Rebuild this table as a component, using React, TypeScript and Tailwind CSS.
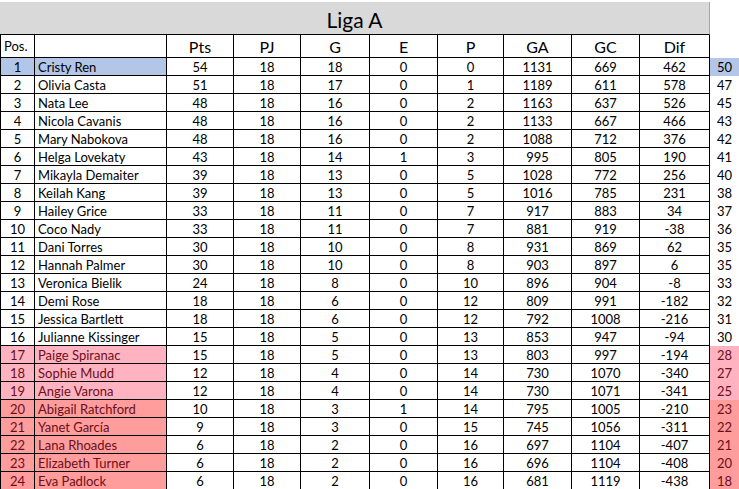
import React from "react";

type Row = [number, string, number, number, number, number, number, number, number, number, number];

const rows: Row[] = [
  [1, "Cristy Ren", 54, 18, 18, 0, 0, 1131, 669, 462, 50],
  [2, "Olivia Casta", 51, 18, 17, 0, 1, 1189, 611, 578, 47],
  [3, "Nata Lee", 48, 18, 16, 0, 2, 1163, 637, 526, 45],
  [4, "Nicola Cavanis", 48, 18, 16, 0, 2, 1133, 667, 466, 43],
  [5, "Mary Nabokova", 48, 18, 16, 0, 2, 1088, 712, 376, 42],
  [6, "Helga Lovekaty", 43, 18, 14, 1, 3, 995, 805, 190, 41],
  [7, "Mikayla Demaiter", 39, 18, 13, 0, 5, 1028, 772, 256, 40],
  [8, "Keilah Kang", 39, 18, 13, 0, 5, 1016, 785, 231, 38],
  [9, "Hailey Grice", 33, 18, 11, 0, 7, 917, 883, 34, 37],
  [10, "Coco Nady", 33, 18, 11, 0, 7, 881, 919, -38, 36],
  [11, "Dani Torres", 30, 18, 10, 0, 8, 931, 869, 62, 35],
  [12, "Hannah Palmer", 30, 18, 10, 0, 8, 903, 897, 6, 35],
  [13, "Veronica Bielik", 24, 18, 8, 0, 10, 896, 904, -8, 33],
  [14, "Demi Rose", 18, 18, 6, 0, 12, 809, 991, -182, 32],
  [15, "Jessica Bartlett", 18, 18, 6, 0, 12, 792, 1008, -216, 31],
  [16, "Julianne Kissinger", 15, 18, 5, 0, 13, 853, 947, -94, 30],
  [17, "Paige Spiranac", 15, 18, 5, 0, 13, 803, 997, -194, 28],
  [18, "Sophie Mudd", 12, 18, 4, 0, 14, 730, 1070, -340, 27],
  [19, "Angie Varona", 12, 18, 4, 0, 14, 730, 1071, -341, 25],
  [20, "Abigail Ratchford", 10, 18, 3, 1, 14, 795, 1005, -210, 23],
  [21, "Yanet García", 9, 18, 3, 0, 15, 745, 1056, -311, 22],
  [22, "Lana Rhoades", 6, 18, 2, 0, 16, 697, 1104, -407, 21],
  [23, "Elizabeth Turner", 6, 18, 2, 0, 16, 696, 1104, -408, 20],
  [24, "Eva Padlock", 6, 18, 2, 0, 16, 681, 1119, -438, 18],
];

const font = { fontFamily: "Lato, 'Open Sans', sans-serif" };

function rowStyle(pos: number): { bg: string; text: string } {
  if (pos === 1) return { bg: "bg-[#b4c6e7]", text: "text-black" };
  if (pos >= 17 && pos <= 19) return { bg: "bg-[#ffb3c1]", text: "text-[#6b0f1a]" };
  if (pos >= 20) return { bg: "bg-[#ff9c9c]", text: "text-[#6b0f1a]" };
  return { bg: "bg-white", text: "text-black" };
}

const numCols = ["w-[67px]", "w-[67px]", "w-[69px]", "w-[68px]", "w-[66px]", "w-[68px]", "w-[68px]", "w-[70px]"];

export default function App() {
  return (
    <div className="w-[739px] h-[489px] overflow-hidden bg-white text-black" style={font}>
      <div className="flex h-[2px] bg-white" />
      <div className="flex h-[33px]">
        <div className="w-[710px] bg-[#d9d9d9] border-b border-black border-r border-r-[#a6a6a6] flex items-center justify-center">
          <span className="text-[21px] leading-none pt-[3px]">Liga A</span>
        </div>
        <div className="flex-1 bg-white" />
      </div>
      <div className="flex h-[23px] text-[16px]">
        <div className="w-[35px] border-l border-black border-r border-b flex items-end pl-[3px] pb-[1px] text-[13px]">Pos.</div>
        <div className="w-[132px] border-r border-b border-black" />
        {["Pts", "PJ", "G", "E", "P", "GA", "GC", "Dif"].map((h, i) => (
          <div key={h} className={`${numCols[i]} border-r border-b border-black flex items-end justify-center leading-[20px]`}>
            {h}
          </div>
        ))}
        <div className="flex-1 bg-white" />
      </div>
      {rows.map((r) => {
        const s = rowStyle(r[0]);
        return (
          <div key={r[0]} className="flex h-[18px] text-[13px] leading-[19px]">
            <div className={`w-[35px] border-l border-r border-b border-black ${s.bg} ${s.text} text-center`}>{r[0]}</div>
            <div className={`w-[132px] border-r border-b border-black ${s.bg} ${s.text} pl-[3px] whitespace-nowrap`}>{r[1]}</div>
            {r.slice(2, 10).map((v, i) => (
              <div key={i} className={`${numCols[i]} border-r border-b border-black text-center`}>
                {v}
              </div>
            ))}
            <div className={`flex-1 ${s.bg} ${r[0] >= 17 ? "text-[#6b0f1a]" : "text-black"} text-center`}>{r[10]}</div>
          </div>
        );
      })}
    </div>
  );
}
